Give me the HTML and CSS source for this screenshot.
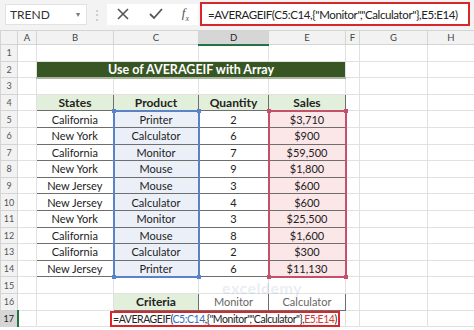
FILE: index.html
```html
<!DOCTYPE html>
<html lang="en">
<head>
    <meta charset="UTF-8">
    <title>AVERAGEIF with Array</title>
    <link rel="stylesheet" href="styles.css">
</head>
<body>
    <div class="barra">
        <div class="nome-caixa">
            <span>TREND</span>
            <span class="seta">&#9662;</span>
        </div>
        <div class="pontos">&#8942;</div>
        <div class="botoes">
            <svg width="14" height="14" viewBox="0 0 14 14"><path d="M2 2 L12 12 M12 2 L2 12" stroke="#555" stroke-width="1.6" fill="none"/></svg>
            <svg width="16" height="14" viewBox="0 0 16 14"><path d="M2 7 L6 11 L14 2" stroke="#555" stroke-width="1.8" fill="none"/></svg>
            <span class="fx">f<sub>x</sub></span>
        </div>
        <div class="formula">=AVERAGEIF(C5:C14,{"Monitor","Calculator"},E5:E14)</div>
    </div>

    <table class="planilha">
        <colgroup>
            <col style="width:17px"><col style="width:19px"><col style="width:77px"><col style="width:85px">
            <col style="width:70px"><col style="width:77px"><col style="width:14px"><col style="width:68px"><col style="width:47px">
        </colgroup>
        <tr class="cabecalho">
            <th class="canto"></th><th>A</th><th>B</th><th>C</th><th class="ativo">D</th><th>E</th><th>F</th><th>G</th><th>H</th>
        </tr>
        <tr><th>1</th><td></td><td></td><td></td><td></td><td></td><td></td><td></td><td></td></tr>
        <tr><th>2</th><td></td><td colspan="4" class="titulo">Use of AVERAGEIF with Array</td><td></td><td></td><td></td></tr>
        <tr><th>3</th><td></td><td></td><td></td><td></td><td></td><td></td><td></td><td></td></tr>
        <tr><th>4</th><td></td><td class="d th-verde">States</td><td class="d th-verde">Product</td><td class="d th-verde">Quantity</td><td class="d th-verde">Sales</td><td></td><td></td><td></td></tr>
        <tr><th>5</th><td></td><td class="d">California</td><td class="d azul topo">Printer</td><td class="d">2</td><td class="d rosa topo">$3,710</td><td></td><td></td><td></td></tr>
        <tr><th>6</th><td></td><td class="d">New York</td><td class="d azul">Calculator</td><td class="d">6</td><td class="d rosa">$900</td><td></td><td></td><td></td></tr>
        <tr><th>7</th><td></td><td class="d">California</td><td class="d azul">Monitor</td><td class="d">7</td><td class="d rosa">$59,500</td><td></td><td></td><td></td></tr>
        <tr><th>8</th><td></td><td class="d">New York</td><td class="d azul">Mouse</td><td class="d">9</td><td class="d rosa">$1,800</td><td></td><td></td><td></td></tr>
        <tr><th>9</th><td></td><td class="d">New Jersey</td><td class="d azul">Mouse</td><td class="d">3</td><td class="d rosa">$600</td><td></td><td></td><td></td></tr>
        <tr><th>10</th><td></td><td class="d">New Jersey</td><td class="d azul">Calculator</td><td class="d">4</td><td class="d rosa">$600</td><td></td><td></td><td></td></tr>
        <tr><th>11</th><td></td><td class="d">New York</td><td class="d azul">Monitor</td><td class="d">3</td><td class="d rosa">$25,500</td><td></td><td></td><td></td></tr>
        <tr><th>12</th><td></td><td class="d">California</td><td class="d azul">Mouse</td><td class="d">8</td><td class="d rosa">$1,600</td><td></td><td></td><td></td></tr>
        <tr><th>13</th><td></td><td class="d">California</td><td class="d azul">Calculator</td><td class="d">2</td><td class="d rosa">$300</td><td></td><td></td><td></td></tr>
        <tr><th>14</th><td></td><td class="d">New Jersey</td><td class="d azul fundo">Printer</td><td class="d">6</td><td class="d rosa fundo">$11,130</td><td></td><td></td><td></td></tr>
        <tr><th>15</th><td></td><td></td><td></td><td></td><td></td><td></td><td></td><td></td></tr>
        <tr><th>16</th><td></td><td></td><td class="d th-verde">Criteria</td><td class="d cinza">Monitor</td><td class="d cinza">Calculator</td><td></td><td></td><td></td></tr>
        <tr><th class="ativo">17</th><td></td><td></td>
            <td colspan="3" class="editando">
                <div class="caixa-edicao">=AVERAGEIF(<span class="ref-azul">C5:C14</span>,{"Monitor","Calculator"},<span class="ref-vermelho">E5:E14</span>)</div>
            </td>
            <td></td><td></td><td></td></tr>
    </table>

    <div class="marca">exceldemy</div>
</body>
</html>
```

FILE: styles.css
```css
body {
    margin: 0;
    padding: 0;
    width: 474px;
    height: 330px;
    overflow: hidden;
    background-color: #fff;
    font-family: Lato, "Open Sans", sans-serif;
    position: relative;
}

/* Barra de fórmulas */
.barra {
    height: 30px;
    background-color: #f3f3f3;
    display: flex;
    align-items: center;
    box-sizing: border-box;
    padding: 0 4px 2px 5px;
}

.nome-caixa {
    width: 82px;
    height: 21px;
    background-color: #fff;
    border: 1px solid #e2e2e2;
    box-sizing: border-box;
    display: flex;
    align-items: center;
    justify-content: space-between;
    padding: 0 6px 0 4px;
    font-size: 12px;
    color: #333;
}

.seta {
    font-size: 8px;
    color: #777;
}

.pontos {
    width: 20px;
    text-align: center;
    color: #bbb;
    font-size: 12px;
}

.botoes {
    width: 91px;
    height: 21px;
    background-color: #fff;
    display: flex;
    align-items: center;
    justify-content: space-around;
    margin-right: 2px;
}

.fx {
    font-family: "Liberation Serif", serif;
    font-style: italic;
    font-size: 13px;
    color: #555;
}

.fx sub {
    font-size: 8px;
}

.formula {
    flex: 1;
    height: 24px;
    border: 2px solid #d9262b;
    box-sizing: border-box;
    background-color: #fff;
    font-size: 11.5px;
    letter-spacing: -0.4px;
    color: #222;
    display: flex;
    align-items: center;
    padding-left: 6px;
    white-space: nowrap;
    overflow: hidden;
}

/* Planilha */
.planilha {
    border-collapse: collapse;
    table-layout: fixed;
    width: 474px;
}

.planilha td, .planilha th {
    height: 16.6px;
    padding: 0;
    border: 1px solid #e1e1e1;
    font-size: 11px;
    text-align: center;
    white-space: nowrap;
    overflow: visible;
    color: #222;
    font-weight: normal;
    box-sizing: border-box;
}

.planilha th {
    background-color: #f2f2f2;
    color: #555;
    font-size: 9px;
    border-color: #d4d4d4;
}

.cabecalho th {
    height: 14px;
    font-size: 9.5px;
    color: #444;
}

.planilha th.ativo {
    background-color: #d6d6d6;
    border-bottom: 2px solid #217346;
    color: #222;
}

.planilha tr:last-child th.ativo {
    border-bottom: 1px solid #d4d4d4;
    border-right: 2px solid #217346;
}

.planilha .titulo {
    background-color: #375623;
    color: #fff;
    font-weight: bold;
    font-size: 12.5px;
    border-bottom: 2px solid #a9b3a0;
}

.planilha .d {
    border: 1px solid #6e6e6e;
}

.planilha .th-verde {
    background-color: #e2efda;
    font-weight: bold;
    font-size: 12px;
}

.planilha .azul {
    background-color: #ebf0f8;
    border-left: 2px solid #5a82c8;
    border-right: 2px solid #5a82c8;
}

.planilha .rosa {
    background-color: #fbe6e8;
    border-left: 2px solid #c5506c;
    border-right: 2px solid #c5506c;
}

.planilha .topo, .planilha .fundo {
    position: relative;
}

.planilha .azul.topo {
    border-top: 2px solid #5a82c8;
}

.planilha .azul.fundo {
    border-bottom: 2px solid #5a82c8;
}

.planilha .rosa.topo {
    border-top: 2px solid #c5506c;
}

.planilha .rosa.fundo {
    border-bottom: 2px solid #c5506c;
}

/* quadradinhos nos cantos da seleção */
.topo::before, .topo::after, .fundo::before, .fundo::after {
    content: "";
    position: absolute;
    width: 4px;
    height: 4px;
    background-color: #5a82c8;
}

.rosa.topo::before, .rosa.topo::after, .rosa.fundo::before, .rosa.fundo::after {
    background-color: #c5506c;
}

.topo::before { left: -3px; top: -3px; }
.topo::after { right: -3px; top: -3px; }
.fundo::before { left: -3px; bottom: -3px; }
.fundo::after { right: -3px; bottom: -3px; }

.planilha .cinza {
    color: #666;
}

.planilha .editando {
    position: relative;
    border-color: #e1e1e1;
}

.caixa-edicao {
    position: absolute;
    left: -4px;
    top: 0;
    width: 230px;
    height: 16px;
    border: 2px solid #d9262b;
    box-sizing: border-box;
    background-color: #fff;
    text-align: left;
    font-size: 10.5px;
    line-height: 12px;
    letter-spacing: -0.45px;
    color: #222;
    padding-left: 1px;
    z-index: 2;
}

.ref-azul {
    color: #2f6fc6;
}

.ref-vermelho {
    color: #d43a3a;
}

.marca {
    position: absolute;
    left: 222px;
    top: 278px;
    font-size: 16px;
    font-weight: bold;
    color: rgba(120, 150, 190, 0.18);
    letter-spacing: 0.5px;
}
```
